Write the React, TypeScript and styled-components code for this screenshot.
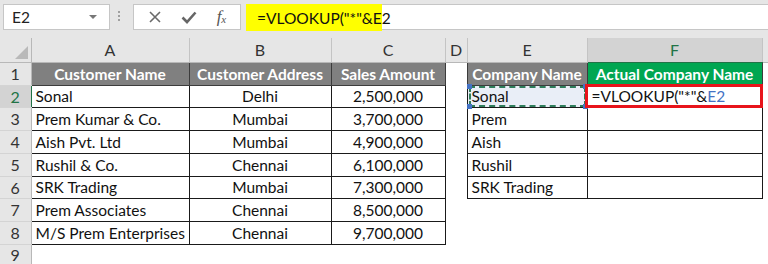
import React from "react";
import styled, { createGlobalStyle } from "styled-components";

const GlobalStyle = createGlobalStyle`
  html, body {
    margin: 0;
    padding: 0;
    background: #ffffff;
  }
  body {
    font-family: Lato, "Open Sans", sans-serif;
    width: 768px;
    height: 264px;
    overflow: hidden;
  }
`;

const customers = [
  { name: "Sonal", city: "Delhi", amount: "2,500,000", company: "Sonal" },
  { name: "Prem Kumar & Co.", city: "Mumbai", amount: "3,700,000", company: "Prem" },
  { name: "Aish Pvt. Ltd", city: "Mumbai", amount: "4,900,000", company: "Aish" },
  { name: "Rushil & Co.", city: "Chennai", amount: "6,100,000", company: "Rushil" },
  { name: "SRK Trading", city: "Mumbai", amount: "7,300,000", company: "SRK Trading" },
  { name: "Prem Associates", city: "Chennai", amount: "8,500,000" },
  { name: "M/S Prem Enterprises", city: "Chennai", amount: "9,700,000" },
];

const rowHeights = [23, 22, 23, 23, 23, 22, 23, 23];

const App: React.FC = () => {
  return (
    <>
      <GlobalStyle />
      <Window>
        <Toolbar>
          <NameBox>
            <span>E2</span>
            <DropArrow />
          </NameBox>
          <Grip>
            <i />
            <i />
            <i />
          </Grip>
          <FuncBox>
            <svg width="14" height="14" viewBox="0 0 14 14">
              <path d="M2 2 L12 12 M12 2 L2 12" stroke="#6a6a6a" strokeWidth="1.6" fill="none" />
            </svg>
            <svg width="16" height="14" viewBox="0 0 16 14">
              <path d="M1.5 7.5 L6 12 L14.5 2.5" stroke="#666" strokeWidth="2.6" fill="none" />
            </svg>
            <Fx>
              f<sub>x</sub>
            </Fx>
          </FuncBox>
          <FormulaInput>
            <Highlight>=VLOOKUP("*"&amp;E2</Highlight>
          </FormulaInput>
        </Toolbar>

        <Sheet>
          <colgroup>
            <Col $w={31} />
            <Col $w={158} />
            <Col $w={142} />
            <Col $w={114} />
            <Col $w={22} />
            <Col $w={120} />
            <Col $w={175} />
            <Col $w={6} />
          </colgroup>
          <thead>
            <HeadRow>
              <Corner>
                <CornerTri />
              </Corner>
              <ColHead>A</ColHead>
              <ColHead>B</ColHead>
              <ColHead>C</ColHead>
              <ColHead>D</ColHead>
              <ColHead>E</ColHead>
              <ColHead $active>F</ColHead>
              <ColHead />
            </HeadRow>
          </thead>
          <tbody>
            <Row $h={rowHeights[0]}>
              <RowHead>1</RowHead>
              <TitleCell>Customer Name</TitleCell>
              <TitleCell>Customer Address</TitleCell>
              <TitleCell>Sales Amount</TitleCell>
              <Blank />
              <TitleCell>Company Name</TitleCell>
              <TitleCell $green>Actual Company Name</TitleCell>
              <Blank />
            </Row>
            {customers.map((c, i) => {
              const r = i + 2;
              return (
                <Row key={r} $h={rowHeights[i + 1]}>
                  <RowHead $active={r === 2}>{r}</RowHead>
                  <DataCell>{c.name}</DataCell>
                  <DataCell $center>{c.city}</DataCell>
                  <DataCell $center>{c.amount}</DataCell>
                  <Blank />
                  {c.company !== undefined ? (
                    r === 2 ? (
                      <CopyCell>
                        {c.company}
                        <Marquee />
                        <Handle $pos="tl" />
                        <Handle $pos="tr" />
                        <Handle $pos="bl" />
                        <Handle $pos="br" />
                      </CopyCell>
                    ) : (
                      <DataCell>{c.company}</DataCell>
                    )
                  ) : (
                    <Blank />
                  )}
                  {c.company !== undefined ? (
                    r === 2 ? (
                      <EditCell>
                        =VLOOKUP("*"&amp;<Ref>E2</Ref>
                        <RedFrame />
                      </EditCell>
                    ) : (
                      <DataCell />
                    )
                  ) : (
                    <Blank />
                  )}
                  <Blank />
                </Row>
              );
            })}
            <Row $h={20}>
              <RowHead>9</RowHead>
              <Blank />
              <Blank />
              <Blank />
              <Blank />
              <Blank />
              <Blank />
              <Blank />
            </Row>
          </tbody>
        </Sheet>
      </Window>
    </>
  );
};

const Window = styled.div`
  width: 768px;
  height: 264px;
  overflow: hidden;
  background: #ffffff;
`;

const Toolbar = styled.div`
  display: flex;
  align-items: flex-start;
  height: 38px;
  box-sizing: border-box;
  padding: 4px 0 0 3px;
  background: #e6e6e6;
`;

const NameBox = styled.div`
  display: flex;
  align-items: center;
  justify-content: space-between;
  width: 107px;
  height: 26px;
  box-sizing: border-box;
  padding: 0 12px 0 8px;
  background: #ffffff;
  border: 1px solid #c6c6c6;
  font-size: 15.5px;
  color: #222;
`;

const DropArrow = styled.span`
  width: 0;
  height: 0;
  border-left: 4px solid transparent;
  border-right: 4px solid transparent;
  border-top: 4px solid #777;
`;

const Grip = styled.div`
  display: flex;
  flex-direction: column;
  gap: 2px;
  margin: 7px 13px 0 8px;

  i {
    display: block;
    width: 2px;
    height: 2px;
    background: #a0a0a0;
  }
`;

const FuncBox = styled.div`
  display: flex;
  align-items: center;
  justify-content: space-around;
  width: 108px;
  height: 26px;
  box-sizing: border-box;
  padding: 0 4px;
  background: #ffffff;
  border: 1px solid #c6c6c6;
`;

const Fx = styled.span`
  font-family: "Liberation Serif", serif;
  font-style: italic;
  font-size: 17px;
  color: #555;

  sub {
    font-size: 11px;
    vertical-align: -1px;
  }
`;

const FormulaInput = styled.div`
  flex: 1;
  margin-left: 5px;
  height: 26px;
  box-sizing: border-box;
  background: #ffffff;
  border: 1px solid #c6c6c6;
  border-right: none;
  display: flex;
`;

const Highlight = styled.div`
  width: 136px;
  margin: -1px 0 -2px -1px;
  box-sizing: border-box;
  padding-left: 11px;
  display: flex;
  align-items: center;
  background: #ffff00;
  font-size: 15.5px;
  color: #111;
  white-space: nowrap;
`;

const Sheet = styled.table`
  border-collapse: collapse;
  table-layout: fixed;
  width: 768px;
  font-size: 15.5px;
  color: #111;
`;

const Col = styled.col<{ $w: number }>`
  width: ${(p) => p.$w}px;
`;

const HeadRow = styled.tr`
  height: 24px;
`;

const Row = styled.tr<{ $h: number }>`
  height: ${(p) => p.$h}px;
`;

const Corner = styled.th`
  position: relative;
  padding: 0;
  background: #e6e6e6;
  border-right: 1px solid #b8b8b8;
  border-bottom: 1px solid #b8b8b8;
`;

const CornerTri = styled.span`
  position: absolute;
  right: 3px;
  bottom: 3px;
  width: 0;
  height: 0;
  border-left: 13px solid transparent;
  border-bottom: 13px solid #b9b9b9;
`;

const ColHead = styled.th<{ $active?: boolean }>`
  padding: 0;
  font-weight: normal;
  font-size: 16px;
  text-align: center;
  color: ${(p) => (p.$active ? "#217346" : "#333")};
  background: ${(p) => (p.$active ? "#d3d3d3" : "#e6e6e6")};
  border-right: 1px solid #c4c4c4;
  border-bottom: 1px solid ${(p) => (p.$active ? "#217346" : "#b8b8b8")};
`;

const RowHead = styled.td<{ $active?: boolean }>`
  padding: 0;
  text-align: center;
  font-size: 16px;
  color: ${(p) => (p.$active ? "#217346" : "#333")};
  background: ${(p) => (p.$active ? "#d3d3d3" : "#e6e6e6")};
  border-bottom: 1px solid #d4d4d4;
  border-right: 1px solid ${(p) => (p.$active ? "#217346" : "#b8b8b8")};
`;

const TitleCell = styled.td<{ $green?: boolean }>`
  padding: 0 2px;
  text-align: center;
  font-weight: bold;
  color: #ffffff;
  white-space: nowrap;
  overflow: hidden;
  background: ${(p) => (p.$green ? "#00a651" : "#808080")};
  border: 1px solid #3c3c3c;
`;

const DataCell = styled.td<{ $center?: boolean }>`
  padding: 0 4px;
  text-align: ${(p) => (p.$center ? "center" : "left")};
  white-space: nowrap;
  overflow: hidden;
  border: 1px solid #1a1a1a;
`;

const Blank = styled.td`
  padding: 0;
`;

const CopyCell = styled.td`
  position: relative;
  padding: 0 4px;
  background: #e9eef7;
  border: 1px solid #1a1a1a;
  white-space: nowrap;
`;

const Marquee = styled.span`
  position: absolute;
  inset: 0 1px 0 1px;
  border: 2px dashed #2e7d5b;
  pointer-events: none;
`;

const Handle = styled.span<{ $pos: "tl" | "tr" | "bl" | "br" }>`
  position: absolute;
  width: 5px;
  height: 5px;
  background: #4472c4;
  ${(p) => (p.$pos[0] === "t" ? "top: -2px;" : "bottom: -2px;")}
  ${(p) => (p.$pos[1] === "l" ? "left: -1px;" : "right: -1px;")}
`;

const EditCell = styled.td`
  position: relative;
  padding: 0 4px;
  white-space: nowrap;
  border: 1px solid #1a1a1a;
`;

const Ref = styled.span`
  color: #4472c4;
`;

const RedFrame = styled.span`
  position: absolute;
  inset: -2px -1px -1px -3px;
  border: 3px solid #e8141b;
  pointer-events: none;
`;

export default App;
